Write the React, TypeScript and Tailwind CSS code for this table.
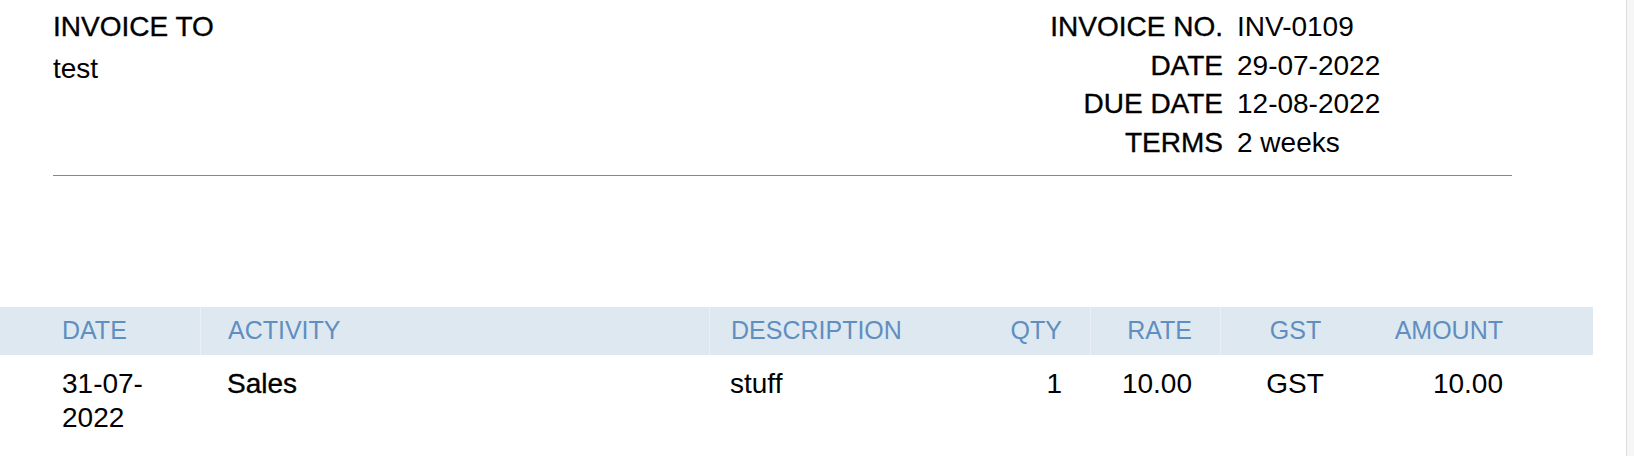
import React from 'react';

const details = [
  { label: 'INVOICE NO.', value: 'INV-0109' },
  { label: 'DATE', value: '29-07-2022' },
  { label: 'DUE DATE', value: '12-08-2022' },
  { label: 'TERMS', value: '2 weeks' },
];

const columns = [
  { key: 'date', title: 'DATE', cell: 'pl-[62px] pr-[8px] justify-start' },
  { key: 'activity', title: 'ACTIVITY', cell: 'pl-[27px] justify-start border-l border-[#e9eff5]' },
  { key: 'description', title: 'DESCRIPTION', cell: 'pl-[21px] justify-start border-l border-[#e9eff5]' },
  { key: 'qty', title: 'QTY', cell: 'pr-[28px] justify-end' },
  { key: 'rate', title: 'RATE', cell: 'pr-[28px] justify-end border-l border-[#e9eff5]' },
  { key: 'gst', title: 'GST', cell: 'justify-center border-l border-[#e9eff5]' },
  { key: 'amount', title: 'AMOUNT', cell: 'pr-[90px] justify-end' },
];

const rows = [
  { date: '31-07-2022', activity: 'Sales', description: 'stuff', qty: '1', rate: '10.00', gst: 'GST', amount: '10.00' },
];

// grid track widths shared by header and body
const grid = 'grid grid-cols-[200px_509px_281px_100px_130px_150px_1fr]';

export default function App() {
  return (
    <div className="flex h-[456px] w-full bg-white text-black font-['Liberation_Sans',Arial,sans-serif] overflow-hidden">
      <div className="flex-1 min-w-0">
        {/* Invoice header */}
        <section className="ml-[53px] mr-[114px] pb-[13px] border-b border-[#5f90c3] flex justify-between">
          <div className="pt-[8px]">
            <h2 className="text-[28px] leading-[38.5px] [-webkit-text-stroke:0.35px_black]">INVOICE TO</h2>
            <p className="text-[28px] leading-[38.5px] mt-[3px]">test</p>
          </div>
          <div className="pt-[8px] grid grid-cols-[auto_275px] gap-x-[14px] leading-[38.5px]">
            {details.map((d) => (
              <React.Fragment key={d.label}>
                <span className="text-right text-[28px] [-webkit-text-stroke:0.35px_black]">{d.label}</span>
                <span className="text-[28px]">{d.value}</span>
              </React.Fragment>
            ))}
          </div>
        </section>

        {/* Line items */}
        <div className="mt-[131px] mr-[33px]">
          <div className={`${grid} h-[48px] bg-[#dee8f0] text-[25px] text-[#5f8fc0]`}>
            {columns.map((c) => (
              <div key={c.key} className={`${c.cell} flex items-center`}>
                {c.title}
              </div>
            ))}
          </div>
          {rows.map((r, i) => (
            <div key={i} className={`${grid} pt-[12px] text-[28px] leading-[33.5px]`}>
              <div className="pl-[62px] pr-[8px]">{r.date}</div>
              <div className="pl-[27px] [-webkit-text-stroke:0.35px_black]">{r.activity}</div>
              <div className="pl-[21px]">{r.description}</div>
              <div className="pr-[28px] text-right">{r.qty}</div>
              <div className="pr-[28px] text-right">{r.rate}</div>
              <div className="text-center">{r.gst}</div>
              <div className="pr-[90px] text-right">{r.amount}</div>
            </div>
          ))}
        </div>
      </div>

      {/* scrollbar track */}
      <div className="w-[8px] shrink-0 border-l border-[#dcdcdc] bg-[#f6f6f6]" />
    </div>
  );
}
